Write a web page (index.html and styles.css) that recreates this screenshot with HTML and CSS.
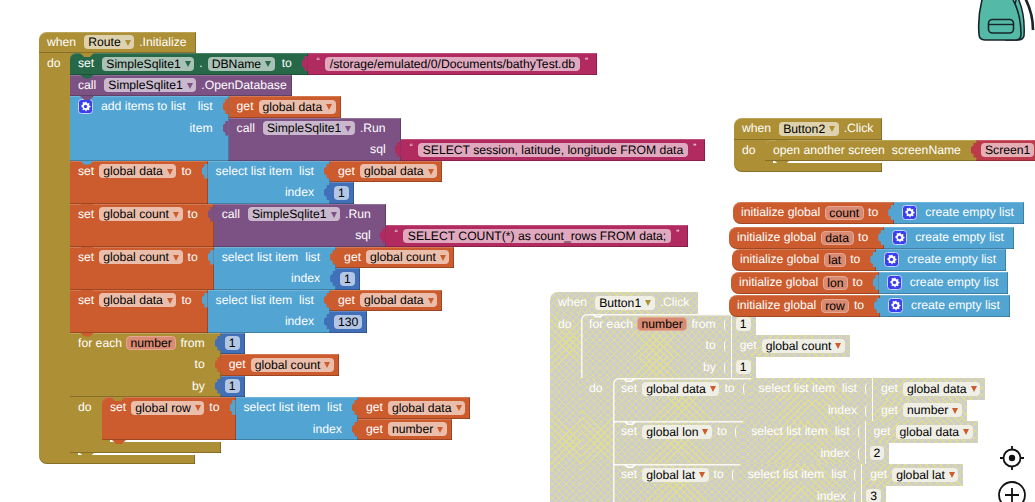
FILE: index.html
```html
<!DOCTYPE html>
<html lang="en">
<head>
    <meta charset="UTF-8">
    <title>Blocks</title>
    <link rel="stylesheet" href="styles.css">
</head>
<body>
    <svg width="0" height="0" class="defs">
        <symbol id="gear" viewBox="0 0 15 15">
            <rect x="0.5" y="0.5" width="14" height="14" rx="3" fill="#3a3ff0" stroke="#c9d4fa"/>
            <path d="M7.5 3.2l1 .1.3 1.1 1 .5 1-.5.8.8-.5 1 .4 1 1.1.3v1.1l-1.1.3-.4 1 .5 1-.8.8-1-.5-1 .4-.3 1.1h-1l-.3-1.1-1-.4-1 .5-.8-.8.5-1-.4-1-1.1-.3V6.5l1.1-.3.4-1-.5-1 .8-.8 1 .5 1-.5z" fill="#fff" transform="translate(.1 -.4) scale(.99)"/>
            <circle cx="7.5" cy="7.5" r="1.7" fill="#3a3ff0"/>
        </symbol>
    </svg>

    <div class="canvas">
        <!-- Route.Initialize -->
        <div class="event route ctrl">
            <div class="head hat ctrl">when <span class="field drop sep">Route</span> <span>.Initialize</span></div>
            <div class="event-body">
                <div class="head spine ctrl">do</div>
                <div class="stmts">
                    <div class="block stmt comp">
                        <div class="head socket comp">set <span class="field drop sep">SimpleSqlite1</span> . <span class="field drop prop">DBName</span> to</div>
                        <div class="block val text">
                            <div class="head text"><span class="q">“</span><span class="field">/storage/emulated/0/Documents/bathyTest.db</span><span class="q">”</span></div>
                        </div>
                    </div>
                    <div class="block stmt proc">
                        <div class="head proc">call <span class="field drop sep">SimpleSqlite1</span> <span>.OpenDatabase</span></div>
                    </div>
                    <div class="block stmt list">
                        <div class="inputs list">
                            <div class="lbl"><svg class="gear"><use href="#gear"/></svg><span class="spread add-label">add items to list</span><span>list</span></div>
                            <div class="block val var"><div class="head">get <span class="field drop">global data</span></div></div>
                            <div class="lbl">item</div>
                            <div class="block val proc">
                                <div class="inputs">
                                    <div class="lbl">call <span class="field drop sep">SimpleSqlite1</span> <span>.Run</span></div>
                                    <div class="lbl">sql</div>
                                    <div class="block val text">
                                        <div class="head text"><span class="q">“</span><span class="field">SELECT session, latitude, longitude FROM data</span><span class="q">”</span></div>
                                    </div>
                                </div>
                            </div>
                        </div>
                    </div>
                    <div class="block stmt var">
                        <div class="head socket">set <span class="field drop">global data</span> to</div>
                        <div class="block val list">
                            <div class="inputs">
                                <div class="lbl"><span class="item-label">select list item</span><span>list</span></div>
                                <div class="block val var"><div class="head">get <span class="field drop">global data</span></div></div>
                                <div class="lbl">index</div>
                                <div class="block val math"><div class="head"><span class="field">1</span></div></div>
                            </div>
                        </div>
                    </div>
                    <div class="block stmt var">
                        <div class="head socket">set <span class="field drop">global count</span> to</div>
                        <div class="block val proc">
                            <div class="inputs">
                                <div class="lbl">call <span class="field drop sep">SimpleSqlite1</span> <span>.Run</span></div>
                                <div class="lbl">sql</div>
                                <div class="block val text">
                                    <div class="head text"><span class="q">“</span><span class="field">SELECT COUNT(*) as count_rows FROM data;</span><span class="q">”</span></div>
                                </div>
                            </div>
                        </div>
                    </div>
                    <div class="block stmt var">
                        <div class="head socket">set <span class="field drop">global count</span> to</div>
                        <div class="block val list">
                            <div class="inputs">
                                <div class="lbl"><span class="item-label">select list item</span><span>list</span></div>
                                <div class="block val var"><div class="head">get <span class="field drop">global count</span></div></div>
                                <div class="lbl">index</div>
                                <div class="block val math"><div class="head"><span class="field">1</span></div></div>
                            </div>
                        </div>
                    </div>
                    <div class="block stmt var">
                        <div class="head socket">set <span class="field drop">global data</span> to</div>
                        <div class="block val list">
                            <div class="inputs">
                                <div class="lbl"><span class="item-label">select list item</span><span>list</span></div>
                                <div class="block val var"><div class="head">get <span class="field drop">global data</span></div></div>
                                <div class="lbl">index</div>
                                <div class="block val math"><div class="head"><span class="field">130</span></div></div>
                            </div>
                        </div>
                    </div>
                    <div class="loop stmt ctrl">
                        <div class="inputs">
                            <div class="lbl">for each <span class="field name">number</span> from</div>
                            <div class="block val math"><div class="head"><span class="field">1</span></div></div>
                            <div class="lbl">to</div>
                            <div class="block val var"><div class="head">get <span class="field drop">global count</span></div></div>
                            <div class="lbl notched">by</div>
                            <div class="block val math"><div class="head"><span class="field">1</span></div></div>
                        </div>
                        <div class="event-body">
                            <div class="head spine inner">do</div>
                            <div class="stmts">
                                <div class="block stmt var">
                                    <div class="head socket">set <span class="field drop">global row</span> to</div>
                                    <div class="block val list">
                                        <div class="inputs">
                                            <div class="lbl"><span class="item-label">select list item</span><span>list</span></div>
                                            <div class="block val var"><div class="head">get <span class="field drop">global data</span></div></div>
                                            <div class="lbl">index</div>
                                            <div class="block val var"><div class="head">get <span class="field drop">number</span></div></div>
                                        </div>
                                    </div>
                                </div>
                            </div>
                        </div>
                        <div class="foot loop-foot"></div>
                    </div>
                </div>
            </div>
            <div class="foot"></div>
        </div>

        <!-- Button2.Click -->
        <div class="event button2 ctrl">
            <div class="head hat">when <span class="field drop sep">Button2</span> <span>.Click</span></div>
            <div class="event-body">
                <div class="head spine">do</div>
                <div class="stmts">
                    <div class="block stmt ctrl">
                        <div class="head socket">open another screen <span class="wide">screenName</span></div>
                        <div class="block val helper"><div class="head"><span class="field">Screen1</span></div></div>
                    </div>
                </div>
            </div>
            <div class="foot"></div>
        </div>

        <!-- Button1.Click, disabled -->
        <div class="event button1 off ctrl">
            <div class="head hat">when <span class="field drop sep">Button1</span> <span>.Click</span></div>
            <div class="event-body">
                <div class="head spine">do</div>
                <div class="stmts">
                    <div class="loop stmt ctrl">
                        <div class="inputs">
                            <div class="lbl">for each <span class="field name">number</span> from</div>
                            <div class="block val math"><div class="head"><span class="field">1</span></div></div>
                            <div class="lbl">to</div>
                            <div class="block val var"><div class="head">get <span class="field drop">global count</span></div></div>
                            <div class="lbl notched">by</div>
                            <div class="block val math"><div class="head"><span class="field">1</span></div></div>
                        </div>
                        <div class="event-body">
                            <div class="head spine inner">do</div>
                            <div class="stmts">
                                <div class="block stmt var">
                                    <div class="head socket">set <span class="field drop">global data</span> to</div>
                                    <div class="block val list">
                                        <div class="inputs">
                                            <div class="lbl"><span class="item-label">select list item</span><span>list</span></div>
                                            <div class="block val var"><div class="head">get <span class="field drop">global data</span></div></div>
                                            <div class="lbl">index</div>
                                            <div class="block val var"><div class="head">get <span class="field drop">number</span></div></div>
                                        </div>
                                    </div>
                                </div>
                                <div class="block stmt var">
                                    <div class="head socket">set <span class="field drop">global lon</span> to</div>
                                    <div class="block val list">
                                        <div class="inputs">
                                            <div class="lbl"><span class="item-label">select list item</span><span>list</span></div>
                                            <div class="block val var"><div class="head">get <span class="field drop">global data</span></div></div>
                                            <div class="lbl">index</div>
                                            <div class="block val math"><div class="head"><span class="field">2</span></div></div>
                                        </div>
                                    </div>
                                </div>
                                <div class="block stmt var">
                                    <div class="head socket">set <span class="field drop">global lat</span> to</div>
                                    <div class="block val list">
                                        <div class="inputs">
                                            <div class="lbl"><span class="item-label">select list item</span><span>list</span></div>
                                            <div class="block val var"><div class="head">get <span class="field drop">global lat</span></div></div>
                                            <div class="lbl">index</div>
                                            <div class="block val math"><div class="head"><span class="field">3</span></div></div>
                                        </div>
                                    </div>
                                </div>
                            </div>
                        </div>
                    </div>
                </div>
            </div>
        </div>

        <!-- globals -->
        <div class="block global g-count">
            <div class="head socket var">initialize global <span class="field name">count</span> to</div>
            <div class="block val list"><div class="head"><svg class="gear"><use href="#gear"/></svg><span class="spread">create empty list</span></div></div>
        </div>
        <div class="block global g-data">
            <div class="head socket var">initialize global <span class="field name">data</span> to</div>
            <div class="block val list"><div class="head"><svg class="gear"><use href="#gear"/></svg><span class="spread">create empty list</span></div></div>
        </div>
        <div class="block global g-lat">
            <div class="head socket var">initialize global <span class="field name">lat</span> to</div>
            <div class="block val list"><div class="head"><svg class="gear"><use href="#gear"/></svg><span class="spread">create empty list</span></div></div>
        </div>
        <div class="block global g-lon">
            <div class="head socket var">initialize global <span class="field name">lon</span> to</div>
            <div class="block val list"><div class="head"><svg class="gear"><use href="#gear"/></svg><span class="spread">create empty list</span></div></div>
        </div>
        <div class="block global g-row">
            <div class="head socket var">initialize global <span class="field name">row</span> to</div>
            <div class="block val list"><div class="head"><svg class="gear"><use href="#gear"/></svg><span class="spread">create empty list</span></div></div>
        </div>

        <!-- backpack -->
        <svg class="backpack" width="60" height="42" viewBox="0 0 60 42">
            <path d="M48 -4C53 5 57 16 57 30" fill="none" stroke="#17252b" stroke-width="2.6"/>
            <path d="M41 -4C46 6 49 20 48 36C47 39 45 40 42 40L30 40Z" fill="#55b9a7" stroke="#17252b" stroke-width="1.5"/>
            <path d="M7 -4C3 10 2 22 3 34C3 38 5 40 9 40L40 40C43 40 45 38 45 34C45 20 41 6 35 -4Z" fill="#55b9a7" stroke="#17252b" stroke-width="1.6"/>
            <rect x="12.5" y="19.5" width="25" height="13.5" rx="4" fill="#55b9a7" stroke="#17252b" stroke-width="1.6"/>
            <path d="M12.5 24.5H37.5" stroke="#17252b" stroke-width="1.4"/>
        </svg>

        <!-- workspace controls -->
        <svg class="target" width="26" height="26" viewBox="0 0 26 26">
            <circle cx="13" cy="13" r="8.5" fill="none" stroke="#111" stroke-width="1.8"/>
            <circle cx="13" cy="13" r="3.2" fill="#111"/>
            <path d="M13 1V5M13 21V25M1 13H5M21 13H25" stroke="#111" stroke-width="1.8"/>
        </svg>
        <svg class="zoom-in" width="30" height="30" viewBox="0 0 30 30">
            <circle cx="15" cy="15" r="13" fill="none" stroke="#111" stroke-width="1.8"/>
            <path d="M15 8V22M8 15H22" stroke="#111" stroke-width="1.8"/>
        </svg>
    </div>
</body>
</html>
```

FILE: styles.css
```css
html, body {
    margin: 0;
    height: 100%;
    overflow: hidden;
    background-color: white;
}

.defs {
    position: absolute;
}

.canvas {
    position: relative;
    width: 1035px;
    height: 502px;
    overflow: hidden;
    font-family: "Liberation Sans", Arial, sans-serif;
    font-size: 12.2px;
    line-height: 21px;
    text-rendering: geometricPrecision;
    color: white;
}

/* block colours */
.ctrl { --a: #ad8f35; --c: var(--pat, var(--a)); }
.var { --a: #cc5c2e; --c: var(--pat, var(--a)); }
.list { --a: #52a4d3; --c: var(--pat, var(--a)); }
.proc { --a: #7c5285; --c: var(--pat, var(--a)); }
.comp { --a: #266848; --c: var(--pat, var(--a)); }
.text { --a: #b12a60; --c: var(--pat, var(--a)); }
.math { --a: #4270b8; --c: var(--pat, var(--a)); }
.helper { --a: #be3949; --c: var(--pat, var(--a)); }

.off {
    --pat: repeating-linear-gradient(45deg, #e3df88 0 0.9px, transparent 0.9px 5px),
           repeating-linear-gradient(-45deg, #e3df88 0 0.9px, transparent 0.9px 5px),
           #cdcdcd;
}

/* positions on the workspace */
.event, .block.global, .backpack, .target, .zoom-in {
    position: absolute;
}

.route { left: 39px; top: 31.5px; }
.button2 { left: 734px; top: 118px; }
.button1 { left: 550px; top: 292px; }
.g-count { left: 733px; top: 202px; }
.g-data { left: 729px; top: 227px; }
.g-lat { left: 732px; top: 249px; }
.g-lon { left: 731px; top: 272px; }
.g-row { left: 729px; top: 295px; }
.backpack { left: 976px; top: 0; }
.target { left: 999px; top: 445px; }
.zoom-in { left: 997px; top: 480px; }

/* generic pieces */
.event, .loop, .stmts {
    display: flex;
    flex-direction: column;
    align-items: flex-start;
}

.event-body {
    display: flex;
    align-items: stretch;
}

.block {
    display: flex;
    align-items: stretch;
    position: relative;
}

.inputs {
    display: grid;
    grid-template-columns: max-content max-content;
    justify-items: start;
}

.inputs > .block {
    grid-column: 2;
}

.head, .lbl, .foot {
    background: var(--c);
}

.head, .lbl {
    display: flex;
    align-items: flex-start;
    gap: 5px;
    min-height: 21.5px;
    box-sizing: border-box;
    white-space: nowrap;
    padding: 0 5px 0 8px;
    box-shadow: inset 0 1px rgba(255, 255, 255, 0.18), inset -1px 0 rgba(0, 0, 0, 0.22), inset 0 -1px rgba(0, 0, 0, 0.22);
}

.lbl {
    grid-column: 1;
    justify-content: flex-end;
    justify-self: stretch;
    padding-right: 16px;
    box-shadow: inset -1px 0 rgba(0, 0, 0, 0.22);
}

.inputs > .lbl:first-child {
    box-shadow: inset 0 1px rgba(255, 255, 255, 0.18), inset -1px 0 rgba(0, 0, 0, 0.22);
}

.inputs > .lbl:nth-last-child(2) {
    box-shadow: inset 0 -1px rgba(0, 0, 0, 0.22), inset -1px 0 rgba(0, 0, 0, 0.22);
}

.head.socket {
    padding-right: 16px;
}

.proc > .inputs > .lbl {
    padding-right: 15px;
}

.loop > .inputs > .lbl {
    gap: 4px;
}

.global > .head {
    gap: 4.5px;
}

.wide {
    margin-left: 2px;
}

.spread {
    margin-left: 3px;
    margin-right: 5px;
}

.add-label {
    margin-right: 7px;
}

.item-label {
    margin-right: 2px;
}

/* fields */
.field {
    display: flex;
    align-items: center;
    gap: 4px;
    height: 14px;
    margin-top: 3.5px;
    padding: 0 4px;
    line-height: 14px;
    border-radius: 4px;
    background-color: rgba(255, 255, 255, 0.6);
    color: black;
}

.head.text .field {
    padding: 0 5px;
}

.sep {
    margin-left: 3px;
}

.prop {
    margin-left: 0;
    margin-right: 2px;
}

.drop {
    padding-right: 3.5px;
}

.drop::after {
    content: "";
    border-left: 3.5px solid transparent;
    border-right: 3.5px solid transparent;
    border-top: 6px solid var(--a);
    margin-top: 1px;
}

.name {
    box-sizing: border-box;
    background-color: #d98a72;
    border: 1px solid #e3a793;
    padding: 0 3.5px;
}

.q {
    font-size: 9px;
    line-height: 13px;
    padding-top: 2px;
}

.head.text {
    padding-left: 9px;
    padding-right: 9px;
}

.math > .head, .helper > .head {
    padding-left: 4px;
}

.gear {
    width: 15px;
    height: 15px;
    margin-top: 3px;
    flex: none;
}

/* value tab */
.val::before {
    content: "";
    position: absolute;
    left: -6px;
    top: 3px;
    width: 6px;
    height: 15px;
    z-index: 2;
    background: var(--a);
    clip-path: polygon(100% 0, 45% 0, 45% 20%, 0 32%, 0 68%, 45% 80%, 45% 100%, 100% 100%);
}

/* statement notch */
.stmt {
    position: relative;
}

.stmt::after, .hat::after, .notched::after {
    content: "";
    position: absolute;
    z-index: 2;
    width: 14px;
    height: 4px;
    background: var(--a);
    clip-path: polygon(0 0, 100% 0, 70% 100%, 30% 100%);
}

.stmt::after {
    left: 10px;
    bottom: -4px;
}

.hat {
    position: relative;
    padding-right: 9px;
    border-top-left-radius: 8px;
}

.hat::after {
    left: 41px;
    bottom: -4px;
}

.notched {
    position: relative;
}

.notched::after {
    left: 41px;
    bottom: -4px;
}

/* c-shaped blocks */
.spine {
    width: 39px;
    margin-right: -8px;
    padding-left: 8px;
    box-shadow: none;
}

.spine.inner {
    width: 40px;
}

.stmts > .stmt:first-child > .head:first-child,
.stmts > .stmt:first-child > .inputs > .lbl:first-child {
    border-top-left-radius: 6px;
}

.stmts {
    padding-bottom: 2px;
}

.foot {
    width: 156px;
    height: 9px;
    border-bottom-left-radius: 8px;
    box-shadow: inset 0 -1px rgba(0, 0, 0, 0.22), inset -1px 0 rgba(0, 0, 0, 0.22);
}

.button2 .foot {
    width: 148px;
}

.loop-foot {
    width: 151px;
    height: 11px;
    border-bottom-left-radius: 0;
}

.global > .head:first-child {
    border-radius: 8px 0 0 8px;
}

/* disabled */
.off .stmt::after, .off .hat::after, .off .notched::after {
    background: white;
    clip-path: polygon(0 0, 20% 0, 35% 60%, 65% 60%, 80% 0, 100% 0, 70% 100%, 30% 100%);
}

.off .val::before {
    background: none;
    clip-path: none;
    left: -8px;
    top: 5px;
    width: 4px;
    height: 12px;
    box-sizing: border-box;
    border-left: 1.5px solid white;
    border-radius: 50%;
}

.off .field {
    background-color: #efefe6;
}

.off .name {
    background-color: #d98a72;
}

.off .head, .off .lbl {
    box-shadow: none;
}

.off .inputs > .lbl {
    box-shadow: inset -1px 0 rgba(255, 255, 255, 0.9);
}

.off .stmt > .head:first-child {
    box-shadow: inset 0 1.5px rgba(255, 255, 255, 0.85), inset 1.5px 0 rgba(255, 255, 255, 0.85);
}

.off .loop > .inputs > .lbl:first-child {
    box-shadow: inset 0 1.5px rgba(255, 255, 255, 0.85), inset 1.5px 0 rgba(255, 255, 255, 0.85), inset -1px 0 rgba(255, 255, 255, 0.9);
}

.off .loop > .inputs > .lbl:not(:first-child) {
    box-shadow: inset 1.5px 0 rgba(255, 255, 255, 0.85), inset -1px 0 rgba(255, 255, 255, 0.9);
}
```
